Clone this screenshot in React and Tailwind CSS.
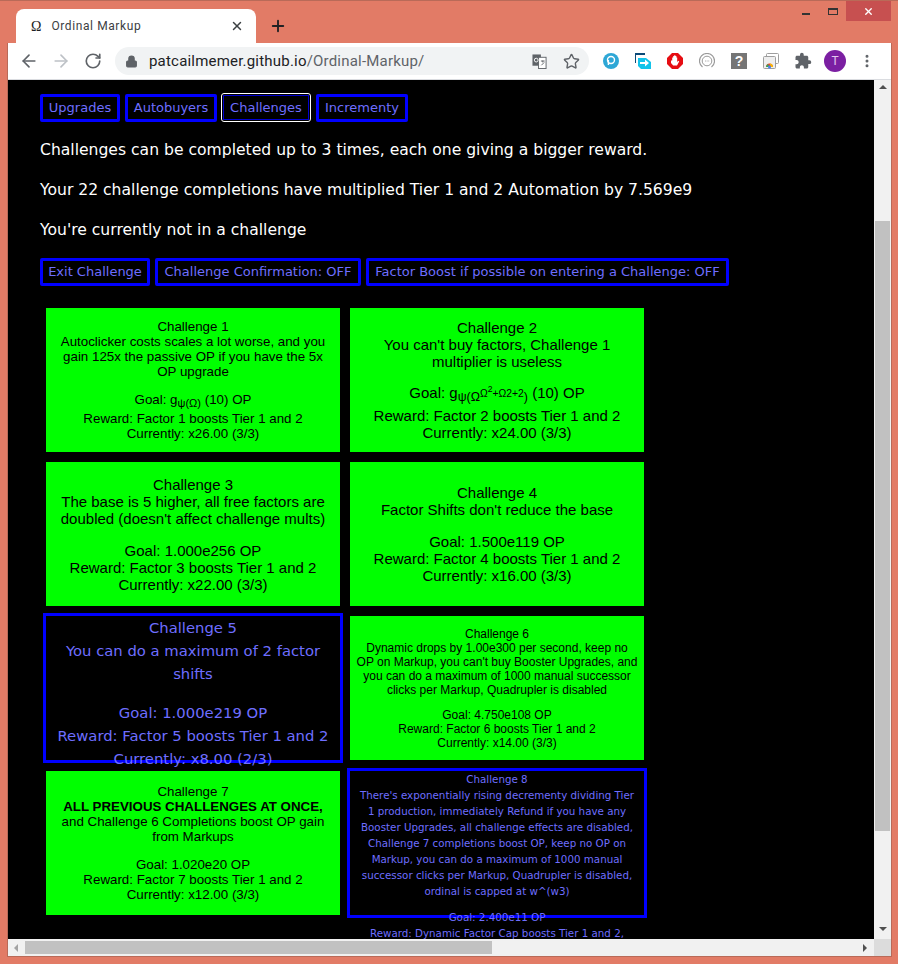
import { ArrowLeft, ArrowRight, RotateCw, Lock, Star, X, Plus, MoreVertical } from 'lucide-react';
import { MdExtension } from 'react-icons/md';

const btn = 'h-[28px] rounded-[2px] border-[3px] border-[#0000ff] bg-black text-center font-["DejaVu_Sans",sans-serif] text-[13px] leading-[22px] text-[#6e6eff]';

function Btn({ w, children }) {
  return <button className={btn + ' ' + w}>{children}</button>;
}

// the tab that currently has keyboard focus
function FocusedBtn({ children }) {
  return (
    <button className="-ml-px h-[29px] w-[90px] rounded-[3px] border border-white bg-black p-px font-['DejaVu_Sans',sans-serif] text-[13px] text-[#6e6eff]">
      <span className="flex h-full items-center justify-center border border-[#0000d0]">{children}</span>
    </button>
  );
}

function Card({ done = true, size, lh, extra = '', children }) {
  const skin = done
    ? 'border-black bg-[#00ff00] text-black font-["Liberation_Sans",Arial,sans-serif]'
    : 'border-[#0000ff] bg-black text-[#6e6eff] font-["DejaVu_Sans",sans-serif]';
  return (
    <div className={'flex h-[150px] w-[300px] flex-col border-[3px] px-[6px] text-center ' + skin + ' ' + extra} style={{ fontSize: size, lineHeight: lh + 'px' }}>
      <div className="my-auto">{children}</div>
    </div>
  );
}

function Gap({ h }) {
  return <div style={{ height: h }} />;
}

function Toolbar() {
  return (
    <div className="flex h-[37px] shrink-0 items-center border-b border-[#dadce0] bg-white pl-[11px] text-[#5f6368]">
      <ArrowLeft size={20} strokeWidth={2} className="mr-[12px]" />
      <ArrowRight size={20} strokeWidth={2} className="mr-[13px] text-[#bdc1c6]" />
      <RotateCw size={18} strokeWidth={2.2} className="mr-[13px]" />
      <div className="flex h-[28px] w-[474px] items-center rounded-full bg-[#f1f3f4] pl-[10px] pr-[9px]">
        <Lock size={13} fill="#5f6368" strokeWidth={2} />
        <span className="ml-[11px] font-['Roboto',sans-serif] text-[15px] tracking-[0.2px] text-[#202124]">
          patcailmemer.github.io<span className="text-[#5f6368]">/Ordinal-Markup/</span>
        </span>
        <svg viewBox="0 0 16 16" className="ml-auto mr-[16px] h-[15px] w-[15px]">
          <rect x="0.5" y="0.5" width="9" height="12" fill="#5f6368" />
          <rect x="7" y="3.5" width="8" height="12" fill="#fff" stroke="#5f6368" />
          <circle cx="4.5" cy="6.5" r="2" fill="none" stroke="#fff" />
          <path d="M9.5 7.5h4M11.5 7v2M10 12l3-3" stroke="#5f6368" fill="none" />
        </svg>
        <Star size={17} strokeWidth={2} />
      </div>
      <div className="ml-[14px] flex items-center gap-[16px]">
        <svg viewBox="0 0 16 16" className="h-[16px] w-[16px]">
          <circle cx="8" cy="8" r="8" fill="#2ea7d6" />
          <circle cx="8" cy="7" r="3.5" fill="none" stroke="#fff" strokeWidth="1.4" />
          <path d="M5.4 7v5" stroke="#fff" strokeWidth="1.4" />
        </svg>
        <svg viewBox="0 0 16 16" className="h-[16px] w-[16px]">
          <path d="M0 10V1h10" fill="none" stroke="#0b4a78" strokeWidth="2" />
          <path d="M3 5h8l5 4v7H6l-3-3z" fill="#12c3ea" />
          <path d="M5 9h5V6.5L14 10l-4 3.5V11H5z" fill="#fff" />
        </svg>
        <svg viewBox="0 0 16 16" className="h-[16px] w-[16px]">
          <path d="M5 0h6l5 5v6l-5 5H5l-5-5V5z" fill="#e60d12" />
          <path d="M4 7.500h1.200V4.500h1V3h1v-.8h1.200V3h1v1.500h.8V9l1.200-1.200.8.700-2.200 4H6.200L4 10z" fill="#fff" />
        </svg>
        <svg viewBox="0 0 16 16" className="h-[16px] w-[16px]" fill="none" stroke="#9a9a9a">
          <path d="M3.500 14a7.500 7.500 0 1 1 9 0" strokeWidth="1.200" />
          <circle cx="8" cy="8" r="4.800" strokeWidth="1" />
          <path d="M6 8h.8M7.700 8h.8M9.400 8h.8" strokeWidth="1" />
        </svg>
        <div className="flex h-[16px] w-[16px] items-center justify-center bg-[#757575] font-['Liberation_Sans',sans-serif] text-[14px] font-bold text-white">?</div>
        <svg viewBox="0 0 16 16" className="h-[16px] w-[16px]">
          <rect x="3.500" y="0.500" width="12" height="10" rx="1" fill="#fff" stroke="#9e9e9e" />
          <rect x="0.500" y="3.500" width="12" height="12" rx="1" fill="#eee" stroke="#9e9e9e" />
          <path d="M3 14a3.500 3.500 0 0 1 7 0z" fill="#ea4335" />
          <path d="M6.500 10.500a3.500 3.500 0 0 1 3.500 3.500H8z" fill="#fbbc05" />
          <path d="M3 14h2l1-1-1-2a3.500 3.500 0 0 0-2 3z" fill="#34a853" />
          <circle cx="6.500" cy="14" r="1.500" fill="#4285f4" />
        </svg>
        <MdExtension size={18} className="-mx-px" />
      </div>
      <div className="ml-[13px] flex h-[22px] w-[22px] items-center justify-center rounded-full bg-[#7b1fa2] font-['Roboto',sans-serif] text-[12px] text-[#e3c7ef]">T</div>
      <MoreVertical size={16} strokeWidth={2.500} className="ml-[13px]" />
    </div>
  );
}

export default function App() {
  return (
    <div className="flex h-[964px] w-[898px] flex-col overflow-hidden border-t border-[#b96a58] bg-[#e27b66] pb-[7px] pl-[7px] pr-[6px]">
      {/* title bar */}
      <div className="flex h-[42px] shrink-0 items-start">
        <div className="ml-[9px] mt-[8px] flex h-[34px] w-[240px] items-center rounded-t-[8px] bg-white pl-[15px] pr-[12px]">
          <span className="font-['Liberation_Serif',serif] text-[14px] text-[#202124]">Ω</span>
          <span className="ml-[10px] font-['Roboto',sans-serif] text-[12px] tracking-[0.6px] text-[#3c4043]">Ordinal Markup</span>
          <X size={14} strokeWidth={2.500} className="ml-auto text-[#3c4043]" />
        </div>
        <Plus size={18} strokeWidth={2.500} className="ml-[13px] mt-[16px] text-[#202124]" />
        <div className="ml-auto mr-px flex items-start">
          <div className="mr-[18px] mt-[12px] h-[2px] w-[8px] bg-[#333]" />
          <div className="mr-[8px] mt-[7px] h-[7px] w-[10px] border border-t-2 border-[#333]" />
          <div className="flex h-[20px] w-[45px] items-center justify-center bg-[#c75050]">
            <X size={11} strokeWidth={3} className="text-white" />
          </div>
        </div>
      </div>

      <div className="flex min-h-0 flex-1 flex-col border-x border-b border-[#b96a58]">
        <Toolbar />

        <div className="flex min-h-0 flex-1">
          {/* page */}
          <div className="min-w-0 flex-1 overflow-hidden bg-black pl-[32px] pt-[13px]">
            <div className="flex items-end gap-[5px]">
              <Btn w="w-[80px]">Upgrades</Btn>
              <Btn w="w-[92px]">Autobuyers</Btn>
              <FocusedBtn>Challenges</FocusedBtn>
              <Btn w="w-[92px]">Incrementy</Btn>
            </div>
            <div className="mt-[16px] font-['DejaVu_Sans',sans-serif] text-[15.6px] leading-[24px] text-white">
              <p>Challenges can be completed up to 3 times, each one giving a bigger reward.</p>
              <p className="mt-[16px]">Your 22 challenge completions have multiplied Tier 1 and 2 Automation by 7.569e9</p>
              <p className="mt-[16px]">You're currently not in a challenge</p>
            </div>
            <div className="mt-[16px] flex gap-[5px]">
              <Btn w="w-[110px]">Exit Challenge</Btn>
              <Btn w="w-[206px]">Challenge Confirmation: OFF</Btn>
              <Btn w="w-[363px]">Factor Boost if possible on entering a Challenge: OFF</Btn>
            </div>
            <div className="ml-[3px] mt-[19px] grid w-[604px] grid-cols-2 gap-[4px]">
              <Card size={13.33} lh={15}>
                Challenge 1<br />Autoclicker costs scales a lot worse, and you gain 125x the passive OP if you have the 5x OP upgrade
                <Gap h={13} />
                <div className="mb-[2px]">Goal: g<sub className="static align-[-3px] text-[0.83em] leading-none">ψ(Ω)</sub> (10) OP</div>
                Reward: Factor 1 boosts Tier 1 and 2<br />Currently: x26.00 (3/3)
              </Card>
              <Card size={15} lh={17}>
                Challenge 2<br />You can't buy factors, Challenge 1 multiplier is useless
                <Gap h={14} />
                <div className="mb-[3px]">
                  Goal: g<sub className="static align-[-3px] text-[0.83em] leading-none">ψ(Ω<sup className="static align-[4px] text-[0.83em] leading-none">Ω<sup className="static align-[5px] text-[0.83em] leading-none">2</sup>+Ω2+2</sup>)</sub> (10) OP
                </div>
                Reward: Factor 2 boosts Tier 1 and 2<br />Currently: x24.00 (3/3)
              </Card>
              <Card size={15} lh={17}>
                Challenge 3<br />The base is 5 higher, all free factors are doubled (doesn't affect challenge mults)
                <Gap h={15} />
                Goal: 1.000e256 OP<br />Reward: Factor 3 boosts Tier 1 and 2<br />Currently: x22.00 (3/3)
              </Card>
              <Card size={15} lh={17}>
                Challenge 4<br />Factor Shifts don't reduce the base
                <Gap h={15} />
                Goal: 1.500e119 OP<br />Reward: Factor 4 boosts Tier 1 and 2<br />Currently: x16.00 (3/3)
              </Card>
              <Card done={false} size={14.8} lh={23}>
                Challenge 5<br />You can do a maximum of 2 factor shifts
                <Gap h={16} />
                Goal: 1.000e219 OP<br />Reward: Factor 5 boosts Tier 1 and 2<br />Currently: x8.00 (2/3)
              </Card>
              <Card size={12} lh={14}>
                Challenge 6<br />Dynamic drops by 1.00e300 per second, keep no OP on Markup, you can't buy Booster Upgrades, and you can do a maximum of 1000 manual successor clicks per Markup, Quadrupler is disabled
                <Gap h={11} />
                Goal: 4.750e108 OP<br />Reward: Factor 6 boosts Tier 1 and 2<br />Currently: x14.00 (3/3)
              </Card>
              <Card size={13.33} lh={15} extra="mt-px">
                Challenge 7<br /><b>ALL PREVIOUS CHALLENGES AT ONCE,</b><br />and Challenge 6 Completions boost OP gain from Markups
                <Gap h={13} />
                Goal: 1.020e20 OP<br />Reward: Factor 7 boosts Tier 1 and 2<br />Currently: x12.00 (3/3)
              </Card>
              <Card done={false} size={10.3} lh={16} extra="mt-px">
                Challenge 8<br />There's exponentially rising decrementy dividing Tier 1 production, immediately Refund if you have any Booster Upgrades, all challenge effects are disabled, Challenge 7 completions boost OP, keep no OP on Markup, you can do a maximum of 1000 manual successor clicks per Markup, Quadrupler is disabled, ordinal is capped at w^(w3)
                <Gap h={10} />
                Goal: 2.400e11 OP<br />Reward: Dynamic Factor Cap boosts Tier 1 and 2,
              </Card>
            </div>
          </div>

          {/* vertical scrollbar */}
          <div className="flex w-[17px] shrink-0 flex-col items-center bg-[#f1f1f1] pt-[5px]">
            <div className="h-0 w-0 border-x-[4px] border-b-[4px] border-x-transparent border-b-[#505050]" />
            <div className="mt-[132px] h-[610px] w-[15px] bg-[#c1c1c1]" />
            <div className="mt-[96px] h-0 w-0 border-x-[4px] border-t-[4px] border-x-transparent border-t-[#505050]" />
          </div>
        </div>

        {/* horizontal scrollbar */}
        <div className="flex h-[17px] shrink-0 items-center bg-[#f1f1f1]">
          <div className="ml-[6px] h-0 w-0 border-y-[4px] border-r-[4px] border-y-transparent border-r-[#a3a3a3]" />
          <div className="ml-[7px] h-[13px] w-[467px] bg-[#c1c1c1]" />
          <div className="ml-auto mr-[7px] h-0 w-0 border-y-[4px] border-l-[4px] border-y-transparent border-l-[#505050]" />
          <div className="h-[17px] w-[17px] bg-[#dcdcdc]" />
        </div>
      </div>
    </div>
  );
}
